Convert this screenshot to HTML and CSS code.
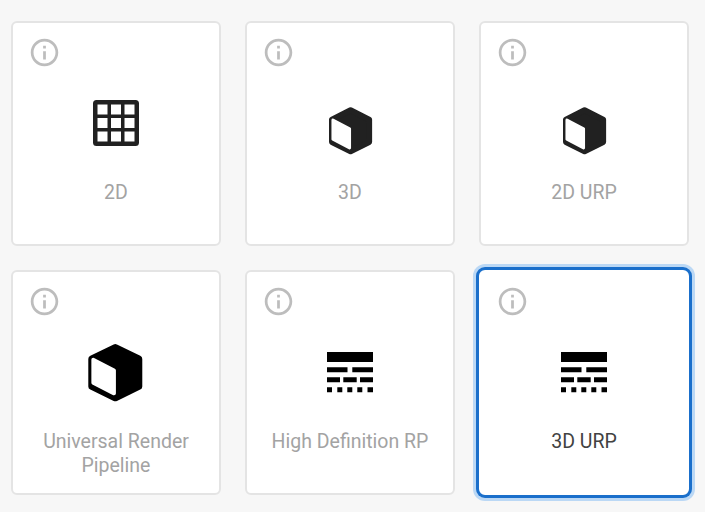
FILE: index.html
```html
<!DOCTYPE html>
<html lang="en">

<head>
    <meta charset="UTF-8">
    <meta name="viewport" content="width=device-width, initial-scale=1.0">
    <title>Templates</title>
    <link rel="stylesheet" href="styles.css">
</head>

<body>
    <div class="template-grid">

        <div class="card">
            <svg class="info" viewBox="0 0 24 24"><path d="M11 7h2v2h-2zm0 4h2v6h-2zm1-9C6.48 2 2 6.48 2 12s4.48 10 10 10 10-4.48 10-10S17.52 2 12 2zm0 18c-4.41 0-8-3.59-8-8s3.59-8 8-8 8 3.59 8 8-3.59 8-8 8z"/></svg>
            <svg class="icon" viewBox="0 0 60 72">
                <path fill="#212121" fill-rule="evenodd" d="M10.500 7h39a3.500 3.500 0 0 1 3.500 3.500v39a3.500 3.500 0 0 1-3.500 3.500h-39A3.500 3.500 0 0 1 7 49.500v-39A3.500 3.500 0 0 1 10.500 7zM11.500 11.500v10h10v-10zM25 11.500v10h10v-10zM38.500 11.500v10h10v-10zM11.500 25v10h10V25zM25 25v10h10V25zM38.500 25v10h10V25zM11.500 38.500v10h10v-10zM25 38.500v10h10v-10zM38.500 38.500v10h10v-10z"/>
            </svg>
            <p class="label">2D</p>
        </div>

        <div class="card">
            <svg class="info" viewBox="0 0 24 24"><path d="M11 7h2v2h-2zm0 4h2v6h-2zm1-9C6.48 2 2 6.48 2 12s4.48 10 10 10 10-4.48 10-10S17.52 2 12 2zm0 18c-4.41 0-8-3.59-8-8s3.59-8 8-8 8 3.59 8 8-3.59 8-8 8z"/></svg>
            <svg class="icon" viewBox="0 0 60 72">
                <g transform="translate(9 14.300) scale(.98)">
                    <polygon class="cube-body" points="22,3 41,12.500 41,35.500 22,45 3,35.500 3,12.500"/>
                    <polygon class="cube-face" points="4,13 21,22 21,41.500 4,32.500"/>
                </g>
            </svg>
            <p class="label">3D</p>
        </div>

        <div class="card">
            <svg class="info" viewBox="0 0 24 24"><path d="M11 7h2v2h-2zm0 4h2v6h-2zm1-9C6.48 2 2 6.48 2 12s4.48 10 10 10 10-4.48 10-10S17.52 2 12 2zm0 18c-4.41 0-8-3.59-8-8s3.59-8 8-8 8 3.59 8 8-3.59 8-8 8z"/></svg>
            <svg class="icon" viewBox="0 0 60 72">
                <g transform="translate(9 14.300) scale(.98)">
                    <polygon class="cube-body" points="22,3 41,12.500 41,35.500 22,45 3,35.500 3,12.500"/>
                    <polygon class="cube-face" points="4,13 21,22 21,41.500 4,32.500"/>
                </g>
            </svg>
            <p class="label">2D URP</p>
        </div>

        <div class="card">
            <svg class="info" viewBox="0 0 24 24"><path d="M11 7h2v2h-2zm0 4h2v6h-2zm1-9C6.48 2 2 6.48 2 12s4.48 10 10 10 10-4.48 10-10S17.52 2 12 2zm0 18c-4.41 0-8-3.59-8-8s3.59-8 8-8 8 3.59 8 8-3.59 8-8 8z"/></svg>
            <svg class="icon" viewBox="0 0 60 72">
                <g transform="translate(2.300 2) scale(1.227 1.194)">
                    <polygon class="cube-body black" points="22,3 41,12.500 41,35.500 22,45 3,35.500 3,12.500"/>
                    <polygon class="cube-face" points="4,13 21,22 21,41.500 4,32.500"/>
                </g>
            </svg>
            <p class="label">Universal Render Pipeline</p>
        </div>

        <div class="card">
            <svg class="info" viewBox="0 0 24 24"><path d="M11 7h2v2h-2zm0 4h2v6h-2zm1-9C6.48 2 2 6.48 2 12s4.48 10 10 10 10-4.48 10-10S17.52 2 12 2zm0 18c-4.41 0-8-3.59-8-8s3.59-8 8-8 8 3.59 8 8-3.59 8-8 8z"/></svg>
            <svg class="icon" viewBox="0 0 60 72">
                <path d="M7 10h46v10H7zM7 25.300h20.500v5H7zM32.300 25.300h20.700v5H32.300zM7 35.300h13v5H7zM23.300 35.300h13.400v5H23.300zM40 35.300h13v5H40zM7 45.300h5v5H7zM17.300 45.300h5v5h-5zM27.300 45.300h5v5h-5zM37.300 45.300h5v5h-5zM47.500 45.300H53v5h-5.500z"/>
            </svg>
            <p class="label">High Definition RP</p>
        </div>

        <div class="card selected">
            <svg class="info" viewBox="0 0 24 24"><path d="M11 7h2v2h-2zm0 4h2v6h-2zm1-9C6.48 2 2 6.48 2 12s4.48 10 10 10 10-4.48 10-10S17.52 2 12 2zm0 18c-4.41 0-8-3.59-8-8s3.59-8 8-8 8 3.59 8 8-3.59 8-8 8z"/></svg>
            <svg class="icon" viewBox="0 0 60 72">
                <path d="M7 10h46v10H7zM7 25.300h20.500v5H7zM32.300 25.300h20.700v5H32.300zM7 35.300h13v5H7zM23.300 35.300h13.400v5H23.300zM40 35.300h13v5H40zM7 45.300h5v5H7zM17.300 45.300h5v5h-5zM27.300 45.300h5v5h-5zM37.300 45.300h5v5h-5zM47.500 45.300H53v5h-5.500z"/>
            </svg>
            <p class="label">3D URP</p>
        </div>

    </div>
</body>

</html>
```

FILE: styles.css
```css
body {
    margin: 0;
    background-color: #f7f7f7;
    font-family: Roboto, "Liberation Sans", sans-serif;
}

.template-grid {
    display: grid;
    grid-template-columns: repeat(3, 210px);
    grid-auto-rows: 225px;
    gap: 24px;
    padding: 21px 0 17px 11px;
}

.card {
    position: relative;
    box-sizing: border-box;
    display: flex;
    flex-direction: column;
    align-items: center;
    padding: 70px 20px 0;
    background-color: #fff;
    border: 2px solid #e4e4e4;
    border-radius: 6px;
}

.card.selected {
    border-color: #fff;
    box-shadow: 0 0 0 3px #1a6fcb, 0 0 0 6px #bbd8f5;
}

.info {
    position: absolute;
    top: 12.500px;
    left: 14.500px;
    width: 33px;
    height: 33px;
    fill: #bdbdbd;
}

.icon {
    flex: none;
    width: 60px;
    height: 72px;
}

.cube-body {
    fill: #212121;
    stroke: #212121;
    stroke-width: 6;
    stroke-linejoin: round;
}

.cube-body.black {
    fill: #000;
    stroke: #000;
}

.cube-face {
    fill: #fff;
    stroke: #fff;
    stroke-width: 3;
    stroke-linejoin: round;
}

.label {
    margin: 16px 0 0;
    font-size: 19.500px;
    line-height: 24px;
    text-align: center;
    color: #a3a3a3;
}

.selected .label {
    color: #424242;
}
```
